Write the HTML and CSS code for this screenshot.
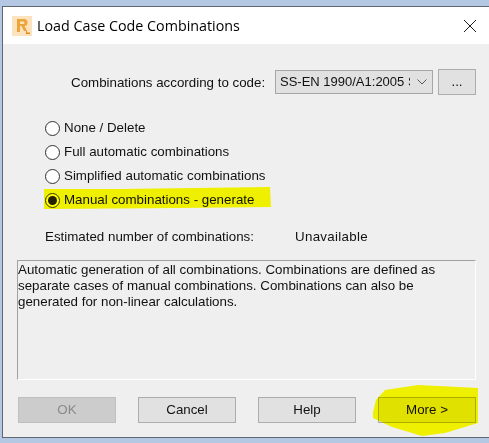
FILE: index.html
```html
<!DOCTYPE html>
<html lang="en">
<head>
<meta charset="utf-8">
<title>Load Case Code Combinations</title>
<link rel="stylesheet" href="styles.css">
</head>
<body>
<div class="window">
  <header class="titlebar">
    <svg class="app-icon" width="20" height="20" viewBox="0 0 20 20">
      <rect width="20" height="20" fill="#fde3bd"/>
      <path fill-rule="evenodd" d="M5 3h7q3.500 0 3.500 3.500T12.500 10l2.500 5h-3l-2.500-5H8v6H5zM8 5.500V8h3q1.500 0 1.500-1.250T11 5.500z" fill="#eba53a"/>
      <path d="M14 15h1v1.500h3V18h-4z" fill="#e58d1c"/>
    </svg>
    <span class="title">Load Case Code Combinations</span>
    <svg class="close" width="12" height="12" viewBox="0 0 12 12"><path d="M0 0L12 12M12 0L0 12" stroke="#1a1a1a" stroke-width="1" fill="none"/></svg>
  </header>
  <main class="content">
    <div class="code-row">
      <span class="code-label">Combinations according to code:</span>
      <div class="combo"><span class="combo-text">SS-EN 1990/A1:2005 S</span>
        <svg width="10" height="6" viewBox="0 0 10 6"><path d="M.5.500L5 5 9.500.500" stroke="#555" fill="none"/></svg>
      </div>
      <div class="btn dots">...</div>
    </div>
    <div class="radios">
      <label class="radio"><i class="dot"></i>None / Delete</label>
      <label class="radio"><i class="dot"></i>Full automatic combinations</label>
      <label class="radio"><i class="dot"></i>Simplified automatic combinations</label>
      <label class="radio"><i class="dot on"></i>Manual combinations - generate</label>
    </div>
    <div class="estimate"><span class="est-label">Estimated number of combinations:</span><span class="est-value">Unavailable</span></div>
    <div class="desc">Automatic generation of all combinations. Combinations are defined as separate cases of manual combinations. Combinations can also be generated for non-linear calculations.</div>
    <div class="actions">
      <div class="btn action disabled">OK</div>
      <div class="btn action">Cancel</div>
      <div class="btn action">Help</div>
      <div class="btn action">More &gt;</div>
    </div>
  </main>
</div>
<svg class="marker" width="489" height="443" viewBox="0 0 489 443">
  <path d="M44 189L120 189 270 187 271 207 180 208 44 209z" fill="#ffff00"/>
  <path d="M373 412L376 400 385 390 418 385 478 388 478 423 445 433 422 436 392 427 373 418z" fill="#ffff00"/>
</svg>
</body>
</html>
```
FILE: styles.css
```css
* { box-sizing: border-box; }
html, body { margin: 0; height: 100%; }
body {
  width: 489px;
  height: 443px;
  overflow: hidden;
  background: #b4c8e4;
  padding: 6px 0 5px 2px;
  position: relative;
  font: 13.33px/16px "Liberation Sans", Arial, sans-serif;
  color: #111;
}
.window {
  height: 432px;
  display: flex;
  flex-direction: column;
  border: solid #62676f;
  border-width: 1px 0 1px 1px;
  background: #efefef;
}
.titlebar {
  height: 37px;
  flex: none;
  background: #fff;
  display: flex;
  align-items: center;
  padding: 0 0 0 9px;
}
.app-icon { flex: none; margin-right: 5px; }
.title { font: 14.3px "Open Sans", sans-serif; color: #000; flex: 1; }
.close { margin-right: 13px; }
.content { flex: 1; display: flex; flex-direction: column; padding: 25px 12px 0 14px; }
.code-row { display: flex; align-items: center; height: 26px; padding-left: 54px; }
.code-label { width: 204px; padding-top: 2px; }
.combo {
  width: 158px; height: 24px;
  border: 1px solid #a6a6a6;
  background: #e1e1e1;
  display: flex; align-items: center; justify-content: space-between;
  padding: 0 5px 0 4px;
}
.combo-text { width: 130px; overflow: hidden; white-space: pre; font-size: 13px; }
.btn {
  border: 1px solid #adadad;
  background: #e1e1e1;
  display: flex; align-items: center; justify-content: center;
}
.dots { width: 38px; height: 26px; margin-left: 5px; }
.radios { display: flex; flex-direction: column; gap: 8px; margin: 25px 0 0 28px; }
.radio { display: flex; align-items: center; height: 16px; gap: 4px; }
.dot {
  width: 15px; height: 15px; flex: none;
  border: 1px solid #333; border-radius: 50%;
  background: #fff;
  display: flex; align-items: center; justify-content: center;
}
.dot.on::after { content: ""; width: 9px; height: 9px; border-radius: 50%; background: #222; }
.estimate { display: flex; margin: 21px 0 0 28px; }
.est-label { width: 250px; }
.est-value { letter-spacing: 0.3px; }
.desc {
  height: 120px; width: 459px;
  margin-top: 15px;
  border: 1px solid;
  border-color: #a0a0a0 #fff #fff #a0a0a0;
  padding: 1px 20px 0 0;
}
.actions { display: flex; gap: 22px; margin: 17px 0 0 1px; }
.action { width: 98px; height: 26px; }
.disabled { background: #ccc; border-color: #bfbfbf; color: #8a8a8a; }
.marker { position: absolute; left: 0; top: 0; mix-blend-mode: multiply; pointer-events: none; }
```
